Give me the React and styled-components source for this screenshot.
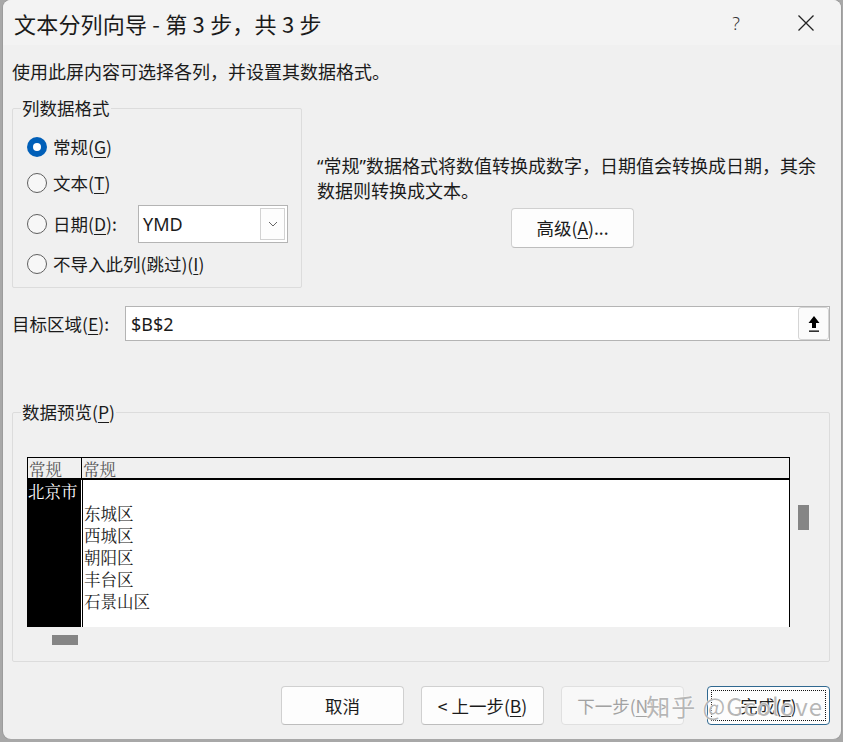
import React from "react";
import styled, { createGlobalStyle, css } from "styled-components";

const GlobalStyle = createGlobalStyle`
  html, body { margin: 0; padding: 0; background: #a8a8a8; }
  body { font-family: "Noto Sans CJK SC", "Noto Sans", sans-serif; color: #1b1b1b; }
  * { box-sizing: border-box; }
`;

const Window = styled.div`
  position: relative;
  width: 838px;
  height: 739px;
  margin-left: 3px;
  background: #f0f0f0;
  border-radius: 8px;
  overflow: hidden;
  display: flex;
  flex-direction: column;
  box-shadow: 0 0 0 1px #9c9c9c;
`;

const TitleBar = styled.div`
  height: 45px;
  flex: none;
  display: flex;
  align-items: center;
  padding-left: 11px;
  background: #f3f3f3;
`;

const Title = styled.div`
  flex: 1;
  font-size: 22px;
  line-height: 28px;
  color: #1a1a1a;
  letter-spacing: 0.2px;
`;

const TitleButton = styled.div`
  width: 70px;
  height: 45px;
  display: flex;
  align-items: center;
  justify-content: center;
  font-family: "Noto Sans", sans-serif;
  font-size: 18px;
  font-weight: 300;
  color: #333;
`;

const Content = styled.div`
  flex: 1;
  display: flex;
  flex-direction: column;
  padding: 0 11px 0 9px;
`;

const Text = styled.div`
  font-size: ${(p) => p.$size || 17.5}px;
  line-height: 24px;
  color: #1b1b1b;
`;

const Intro = styled(Text)`
  margin-top: 14px;
`;

const Quote = styled.span`
  font-family: "Noto Sans", sans-serif;
`;

const TopRow = styled.div`
  display: flex;
  margin-top: 13px;
`;

const Group = styled.fieldset`
  margin: 0;
  border: 1px solid #dcdcdc;
  border-radius: 2px;
  ${(p) => css`
    width: ${p.$w};
    height: ${p.$h};
    padding: ${p.$pad};
  `}
  min-width: 0;
`;

const Legend = styled.legend`
  padding: 0 1px;
  margin-left: -6px;
  font-size: 17.5px;
  line-height: 24px;
  color: #1b1b1b;
`;

const RadioRow = styled.div`
  display: flex;
  align-items: center;
  height: ${(p) => p.$h}px;
  font-size: 17.5px;
  line-height: 24px;
`;

const RadioDot = styled.span`
  flex: none;
  width: 20px;
  height: 20px;
  border-radius: 50%;
  margin-right: 6px;
  position: relative;
  ${(p) =>
    p.$checked
      ? css`
          background: #005fb8;
          &::after {
            content: "";
            position: absolute;
            left: 6px;
            top: 6px;
            width: 8px;
            height: 8px;
            border-radius: 50%;
            background: #fff;
          }
        `
      : css`
          background: #f7f7f7;
          border: 1px solid #5f5f5f;
        `}
`;

const U = styled.span`
  text-decoration: underline;
  text-underline-offset: 3px;
  text-decoration-thickness: 1px;
`;

const DateLabel = styled.span`
  width: 85px;
`;

const Combo = styled.div`
  width: 150px;
  height: 38px;
  background: #fff;
  border: 1px solid #b4b4b4;
  display: flex;
  align-items: center;
  justify-content: space-between;
  padding: 2px 2px 2px 4px;
  font-family: "Noto Sans", sans-serif;
  font-size: 18px;
`;

const ComboButton = styled.div`
  width: 25px;
  height: 32px;
  border: 1px solid #d2d2d2;
  background: #fdfdfd;
  display: flex;
  align-items: center;
  justify-content: center;
`;

const Desc = styled.div`
  flex: 1;
  display: flex;
  flex-direction: column;
  padding-left: 15px;
  padding-top: 57px;
`;

const Button = styled.div`
  height: ${(p) => p.$h || 39}px;
  width: 123px;
  border-radius: 4px;
  display: flex;
  align-items: center;
  justify-content: center;
  font-size: 17.5px;
  line-height: 24px;
  position: relative;
  background: #fdfdfd;
  border: 1px solid #d0d0d0;
  border-bottom-color: #bdbdbd;
  color: #1b1b1b;
  ${(p) =>
    p.$disabled &&
    css`
      background: #f8f8f8;
      border-color: #e0e0e0;
      color: #a2a2a2;
    `}
  ${(p) =>
    p.$default &&
    css`
      border: 1px solid #2f6890;
      &::after {
        content: "";
        position: absolute;
        inset: 3px;
        border: 1px dotted #111;
      }
    `}
`;

const AdvButton = styled(Button)`
  align-self: center;
  margin-top: 6px;
  margin-left: -2px;
  height: 40px;
`;

const DestRow = styled.div`
  display: flex;
  align-items: center;
  margin-top: 18px;
`;

const DestLabel = styled(Text)`
  width: 113px;
  flex: none;
`;

const DestInput = styled.div`
  flex: 1;
  height: 35px;
  background: #fff;
  border: 1px solid #b4b4b4;
  display: flex;
  align-items: center;
  justify-content: space-between;
  padding: 0 0 0 5px;
  font-family: "Noto Sans", sans-serif;
  font-size: 18px;
`;

const PickButton = styled.div`
  width: 31px;
  height: 33px;
  border: 1px solid #d5d5d5;
  border-radius: 3px;
  background: #fbfbfb;
  display: flex;
  align-items: center;
  justify-content: center;
`;

const PreviewRow = styled.div`
  display: flex;
`;

const PreviewMain = styled.div`
  width: 763px;
  display: flex;
  flex-direction: column;
`;

const Table = styled.div`
  height: 170px;
  border: 1px solid #000;
  border-bottom: none;
  display: flex;
  flex-direction: column;
  font-family: "Noto Serif CJK SC", "Noto Sans CJK SC", serif;
  font-size: 16.5px;
  line-height: 22px;
`;

const HeaderRow = styled.div`
  display: grid;
  grid-template-columns: 53px 1fr;
  height: 22px;
  background: #f0f0f0;
  color: #555;
  border-bottom: 2px solid #000;
`;

const HeadCell = styled.div`
  padding-left: 1px;
  ${(p) => p.$divider && css`border-left: 1px solid #000;`}
`;

const TableBody = styled.div`
  flex: 1;
  display: grid;
  grid-template-columns: 53px 1fr;
  background: #fff;
`;

const Col = styled.div`
  display: flex;
  flex-direction: column;
  ${(p) =>
    p.$selected
      ? css`
          background: #000;
          color: #fff;
        `
      : css`
          border-left: 1px solid #000;
          margin-left: 1px;
          color: #222;
          padding-left: 1px;
        `}
`;

const Cell = styled.div`
  height: 22px;
  white-space: nowrap;
  overflow: hidden;
`;

const HScroll = styled.div`
  height: 24px;
  padding: 8px 0 0 25px;
`;

const Thumb = styled.div`
  background: #858585;
  width: ${(p) => p.$w}px;
  height: ${(p) => p.$h}px;
`;

const VScroll = styled.div`
  padding: 48px 0 0 8px;
`;

const Footer = styled.div`
  position: relative;
  display: flex;
  justify-content: flex-end;
  gap: 17px;
  padding-top: 24px;
`;

const LastButton = styled(Button)`
  margin-left: 6px;
`;

const Watermark = styled.div`
  position: absolute;
  right: 7px;
  top: 27px;
  font-size: 24px;
  line-height: 34px;
  color: rgba(150, 150, 150, 0.7);
  text-shadow: 0 0 2px #fff, 0 0 1px #fff;
  letter-spacing: 1px;
  pointer-events: none;
`;

const CloseIcon = () => (
  <svg width="18" height="18" viewBox="0 0 18 18">
    <path d="M1.5 1.5 L16.5 16.5 M16.5 1.5 L1.5 16.5" stroke="#222" strokeWidth="1.3" />
  </svg>
);

const Chevron = () => (
  <svg width="10" height="6" viewBox="0 0 10 6">
    <path d="M1 1 L5 5 L9 1" fill="none" stroke="#666" strokeWidth="1" />
  </svg>
);

const PickIcon = () => (
  <svg width="14" height="18" viewBox="0 0 14 18">
    <path d="M7 1 L1.5 8 H5 V13 H9 V8 H12.5 Z" fill="#000" />
    <rect x="2" y="15.5" width="10" height="1.3" fill="#000" />
  </svg>
);

const districts = ["", "东城区", "西城区", "朝阳区", "丰台区", "石景山区"];

export default function App() {
  return (
    <>
      <GlobalStyle />
      <Window>
        <TitleBar>
          <Title>文本分列向导 - 第 3 步，共 3 步</Title>
          <TitleButton>?</TitleButton>
          <TitleButton>
            <CloseIcon />
          </TitleButton>
        </TitleBar>
        <Content>
          <Intro $size={18}>使用此屏内容可选择各列，并设置其数据格式。</Intro>
          <TopRow>
            <Group $w="290px" $h="192px" $pad="9px 10px 0 14px">
              <Legend>列数据格式</Legend>
              <RadioRow $h={36}>
                <RadioDot $checked />
                <span>
                  常规(<U>G</U>)
                </span>
              </RadioRow>
              <RadioRow $h={36}>
                <RadioDot />
                <span>
                  文本(<U>T</U>)
                </span>
              </RadioRow>
              <RadioRow $h={45}>
                <RadioDot />
                <DateLabel>
                  日期(<U>D</U>):
                </DateLabel>
                <Combo>
                  <span>YMD</span>
                  <ComboButton>
                    <Chevron />
                  </ComboButton>
                </Combo>
              </RadioRow>
              <RadioRow $h={36}>
                <RadioDot />
                <span>
                  不导入此列(跳过)(<U>I</U>)
                </span>
              </RadioRow>
            </Group>
            <Desc>
              <Text $size={18}>
                <Quote>“</Quote>常规<Quote>”</Quote>数据格式将数值转换成数字，日期值会转换成日期，其余
                <br />
                数据则转换成文本。
              </Text>
              <AdvButton>
                高级(<U>A</U>)...
              </AdvButton>
            </Desc>
          </TopRow>
          <DestRow>
            <DestLabel>
              目标区域(<U>E</U>):
            </DestLabel>
            <DestInput>
              <span>$B$2</span>
              <PickButton>
                <PickIcon />
              </PickButton>
            </DestInput>
          </DestRow>
          <Group $w="818px" $h="262px" $pad="33px 10px 0 14px" style={{ marginTop: 59 }}>
            <Legend>
              数据预览(<U>P</U>)
            </Legend>
            <PreviewRow>
              <PreviewMain>
                <Table>
                  <HeaderRow>
                    <HeadCell>常规</HeadCell>
                    <HeadCell $divider>常规</HeadCell>
                  </HeaderRow>
                  <TableBody>
                    <Col $selected>
                      <Cell>北京市</Cell>
                    </Col>
                    <Col>
                      {districts.map((d, i) => (
                        <Cell key={i}>{d}</Cell>
                      ))}
                    </Col>
                  </TableBody>
                </Table>
                <HScroll>
                  <Thumb $w={26} $h={10} />
                </HScroll>
              </PreviewMain>
              <VScroll>
                <Thumb $w={11} $h={25} />
              </VScroll>
            </PreviewRow>
          </Group>
          <Footer>
            <Button>取消</Button>
            <Button>
              &lt; 上一步(<U>B</U>)
            </Button>
            <Button $disabled>
              下一步(<U>N</U>) &gt;
            </Button>
            <LastButton $default>
              完成(<U>F</U>)
            </LastButton>
            <Watermark>知乎 @Gcolove</Watermark>
          </Footer>
        </Content>
      </Window>
    </>
  );
}
